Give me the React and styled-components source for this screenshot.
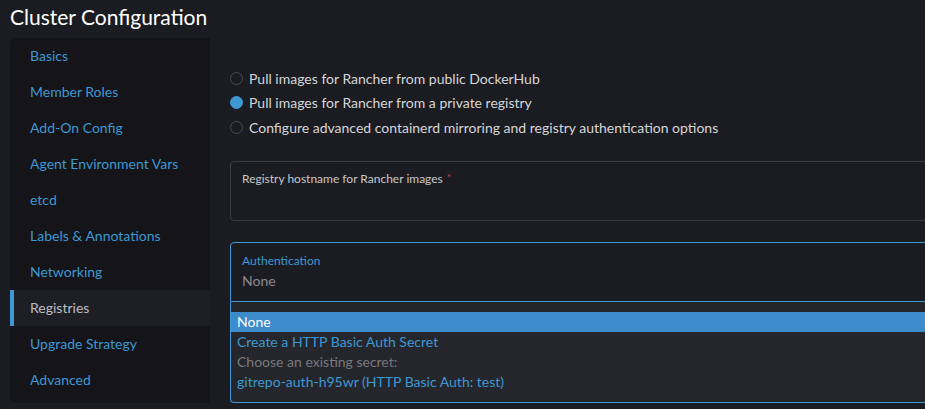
import styled, { createGlobalStyle } from "styled-components";

const GlobalStyle = createGlobalStyle`
  html, body {
    margin: 0;
    padding: 0;
    background: #1b1c21;
    overflow: hidden;
  }
  body {
    font-family: Lato, "Noto Sans", sans-serif;
    color: #d7d7da;
  }
`;

const navItems = [
  "Basics",
  "Member Roles",
  "Add-On Config",
  "Agent Environment Vars",
  "etcd",
  "Labels & Annotations",
  "Networking",
  "Registries",
  "Upgrade Strategy",
  "Advanced",
];

const radios = [
  { label: "Pull images for Rancher from public DockerHub", checked: false },
  { label: "Pull images for Rancher from a private registry", checked: true },
  {
    label: "Configure advanced containerd mirroring and registry authentication options",
    checked: false,
  },
];

const App = () => {
  return (
    <Page>
      <GlobalStyle />
      <Title>Cluster Configuration</Title>
      <Body>
        <SideNav>
          {navItems.map((item) => (
            <NavItem key={item} $active={item === "Registries"}>
              {item}
            </NavItem>
          ))}
        </SideNav>
        <Main>
          <RadioGroup>
            {radios.map((r) => (
              <RadioRow key={r.label}>
                <RadioDot $checked={r.checked} />
                <span>{r.label}</span>
              </RadioRow>
            ))}
          </RadioGroup>
          <InputBox>
            <FieldLabel>
              Registry hostname for Rancher images<Req>*</Req>
            </FieldLabel>
          </InputBox>
          <SelectWrap>
            <SelectBox>
              <FieldLabel $focus>Authentication</FieldLabel>
              <SelectValue>None</SelectValue>
            </SelectBox>
            <Menu>
              <Option $selected>None</Option>
              <Option>Create a HTTP Basic Auth Secret</Option>
              <Option $muted>Choose an existing secret:</Option>
              <Option>gitrepo-auth-h95wr (HTTP Basic Auth: test)</Option>
            </Menu>
          </SelectWrap>
        </Main>
      </Body>
    </Page>
  );
};

export default App;

const Page = styled.div`
  width: 100%;
  height: 409px;
`;

const Title = styled.h1`
  margin: 0;
  height: 38px;
  padding-left: 10px;
  font-size: 21px;
  font-weight: 400;
  line-height: 34px;
  color: #ffffff;
`;

const Body = styled.div`
  display: flex;
  margin-left: 10px;
`;

const SideNav = styled.nav`
  width: 200px;
  flex-shrink: 0;
  background: #141419;
  border-radius: 6px 0 0 6px;
  overflow: hidden;
`;

const NavItem = styled.div`
  height: 36px;
  display: flex;
  align-items: center;
  padding-left: ${(p) => (p.$active ? "16px" : "20px")};
  padding-bottom: 1px;
  box-sizing: border-box;
  font-size: 14px;
  color: ${(p) => (p.$active ? "#bdbdc2" : "#3d98d3")};
  background: ${(p) => (p.$active ? "#1e1f24" : "transparent")};
  border-left: ${(p) => (p.$active ? "4px solid #3d98d3" : "none")};
`;

const Main = styled.main`
  flex: 1;
  padding: 28px 0 0 20px;
  margin-right: -10px;
`;

const RadioGroup = styled.div`
  display: flex;
  flex-direction: column;
  margin-bottom: 21px;
`;

const RadioRow = styled.label`
  height: 24.5px;
  display: flex;
  align-items: center;
  gap: 6px;
  font-size: 14px;
  color: #d5d5d8;
`;

const RadioDot = styled.span`
  width: 13px;
  height: 13px;
  border-radius: 50%;
  box-sizing: border-box;
  border: 1px solid ${(p) => (p.$checked ? "#3d98d3" : "#4a4b52")};
  background: ${(p) => (p.$checked ? "#3d98d3" : "transparent")};
`;

const InputBox = styled.div`
  height: 60px;
  box-sizing: border-box;
  border: 1px solid #3c3d43;
  border-radius: 4px;
  padding: 10px 11px;
  margin-bottom: 21px;
`;

const FieldLabel = styled.div`
  font-size: 12px;
  line-height: 14px;
  color: ${(p) => (p.$focus ? "#3d98d3" : "#c8c8cc")};
`;

const Req = styled.span`
  display: inline-block;
  vertical-align: top;
  line-height: 10px;
  margin-left: 4px;
  color: #e0393f;
  font-size: 10px;
`;

const SelectWrap = styled.div`
  display: flex;
  flex-direction: column;
`;

const SelectBox = styled.div`
  height: 60px;
  box-sizing: border-box;
  border: 1px solid #3d98d3;
  border-radius: 4px 4px 0 0;
  padding: 11px 11px;
`;

const SelectValue = styled.div`
  margin-top: 4px;
  font-size: 14px;
  color: #8b8b91;
`;

const Menu = styled.div`
  background: #25262b;
  border: 1px solid #3d98d3;
  border-top: none;
  border-radius: 0 0 4px 4px;
  padding: 10px 0 10px;
`;

const Option = styled.div`
  height: 20px;
  display: flex;
  align-items: center;
  padding-left: 6px;
  font-size: 14px;
  color: ${(p) => (p.$selected ? "#ffffff" : p.$muted ? "#78787e" : "#3d98d3")};
  background: ${(p) => (p.$selected ? "#3d8bcb" : "transparent")};
`;
